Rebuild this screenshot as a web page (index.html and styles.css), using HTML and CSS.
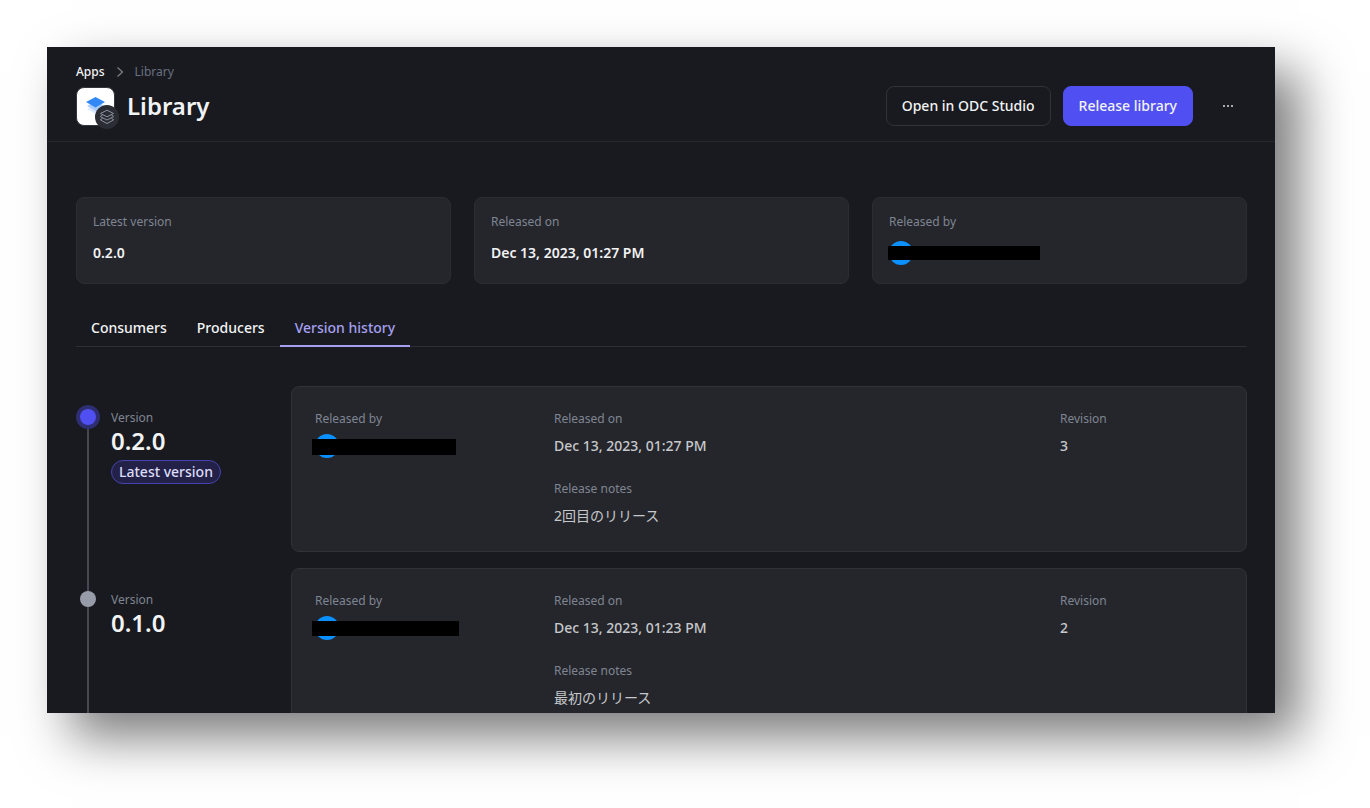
FILE: index.html
```
<!DOCTYPE html>
<html lang="en">
<head>
    <meta charset="UTF-8">
    <meta name="viewport" content="width=device-width, initial-scale=1.0">
    <title>Library - Version history</title>
    <link rel="stylesheet" href="styles.css">
</head>
<body>
    <div class="window">
        <header class="page-header">
            <div class="heading">
                <nav class="breadcrumb" aria-label="Breadcrumb">
                    <a href="#">Apps</a>
                    <svg width="8" height="12" viewBox="0 0 8 12"><path d="M1.500 1.500 6.500 6l-5 4.500" fill="none" stroke="#7d828c" stroke-width="1.200"/></svg>
                    <span>Library</span>
                </nav>
                <div class="title">
                    <div class="app-icon">
                        <svg width="38" height="38" viewBox="0 0 38 38">
                            <path d="M10 21 19 16.500 28 21l-9 5z" fill="#dbe9fd"/>
                            <path d="M10 18 19 13.500 28 18l-9 5z" fill="#a9ccfa"/>
                            <path d="M9 14 18.500 9 28 14l-9.500 5.500z" fill="#3289f5"/>
                        </svg>
                        <span class="app-type">
                            <svg width="16" height="16" viewBox="0 0 16 16" fill="none" stroke="#8b919c" stroke-linejoin="round">
                                <path d="M8 1.200 14.500 4.500 8 7.800 1.500 4.500z"/>
                                <path d="M1.500 7.200v.5L8 11l6.500-3.300v-.5L12.500 6.200M1.500 7.200l2-1M1.500 10.500v.5L8 14.500l6.500-3.500v-.5l-2-1M1.500 10.500l2-1"/>
                            </svg>
                        </span>
                    </div>
                    <h1>Library</h1>
                </div>
            </div>
            <div class="actions">
                <button type="button" class="btn">Open in ODC Studio</button>
                <button type="button" class="btn btn-primary">Release library</button>
                <button type="button" class="btn-more" aria-label="More">
                    <svg width="12" height="4" viewBox="0 0 12 4" fill="#d9dbdf"><circle cx="2" cy="2" r="1"/><circle cx="6" cy="2" r="1"/><circle cx="10" cy="2" r="1"/></svg>
                </button>
            </div>
        </header>

        <main>
            <section class="summary">
                <div class="card">
                    <p class="label">Latest version</p>
                    <p class="value">0.2.0</p>
                </div>
                <div class="card">
                    <p class="label">Released on</p>
                    <p class="value">Dec 13, 2023, 01:27 PM</p>
                </div>
                <div class="card">
                    <p class="label">Released by</p>
                    <div class="user"><span class="avatar"></span><span class="mask"></span></div>
                </div>
            </section>

            <nav class="tabs">
                <a href="#">Consumers</a>
                <a href="#">Producers</a>
                <a href="#" class="active" aria-current="page">Version history</a>
            </nav>

            <ol class="timeline">
                <li class="latest">
                    <span class="dot"></span>
                    <div class="version">
                        <p class="label">Version</p>
                        <h2>0.2.0</h2>
                        <span class="badge">Latest version</span>
                    </div>
                    <div class="release">
                        <div>
                            <p class="label">Released by</p>
                            <div class="user"><span class="avatar"></span><span class="mask"></span></div>
                        </div>
                        <div>
                            <p class="label">Released on</p>
                            <p class="detail">Dec 13, 2023, 01:27 PM</p>
                            <p class="label">Release notes</p>
                            <p class="detail" lang="ja">2回目のリリース</p>
                        </div>
                        <div>
                            <p class="label">Revision</p>
                            <p class="detail">3</p>
                        </div>
                    </div>
                </li>
                <li>
                    <span class="dot"></span>
                    <div class="version">
                        <p class="label">Version</p>
                        <h2>0.1.0</h2>
                    </div>
                    <div class="release">
                        <div>
                            <p class="label">Released by</p>
                            <div class="user"><span class="avatar"></span><span class="mask"></span></div>
                        </div>
                        <div>
                            <p class="label">Released on</p>
                            <p class="detail">Dec 13, 2023, 01:23 PM</p>
                            <p class="label">Release notes</p>
                            <p class="detail" lang="ja">最初のリリース</p>
                        </div>
                        <div>
                            <p class="label">Revision</p>
                            <p class="detail">2</p>
                        </div>
                    </div>
                </li>
            </ol>
        </main>
    </div>
</body>
</html>
```

FILE: styles.css
```
* { box-sizing: border-box; }
body {
    margin: 0;
    height: 100vh;
    padding: 47px 95px 95px 47px;
    background: #fff;
    color: #f2f3f5;
    font-family: "Noto Sans", "Noto Sans CJK JP", sans-serif;
    font-size: 14px;
    line-height: 20px;
}
h1, h2, p, ol { margin: 0; padding: 0; }
a { color: inherit; text-decoration: none; }
svg { display: block; }

.window {
    height: 100%;
    overflow: hidden;
    background: #191a1f;
    box-shadow: 24px 24px 48px rgba(0, 0, 0, 0.52);
}

/* header */
.page-header {
    display: flex;
    justify-content: space-between;
    align-items: flex-end;
    padding: 16px 24px 15px 29px;
    border-bottom: 1px solid #27282d;
}
.breadcrumb {
    display: flex;
    align-items: center;
    gap: 11px;
    margin-bottom: 5px;
    font-size: 12px;
    line-height: 18px;
    color: #6a7080;
}
.breadcrumb a { color: #f2f3f5; font-weight: 500; }
.title { display: flex; align-items: center; gap: 12px; height: 40px; }
.title h1 { font-size: 24px; line-height: 32px; font-weight: 600; }
.app-icon {
    position: relative;
    width: 39px;
    height: 39px;
    border: 1px solid #34363d;
    border-radius: 8px;
    background: #fff;
}
.app-type {
    position: absolute;
    right: -5px;
    bottom: -4px;
    display: grid;
    place-items: center;
    width: 24px;
    height: 24px;
    border-radius: 50%;
    background: #2b2d34;
}
.actions { display: flex; gap: 12px; }
.btn {
    height: 40px;
    padding: 0 15px;
    border: 1px solid #303238;
    border-radius: 8px;
    background: transparent;
    color: #f2f3f5;
    font: inherit;
    font-weight: 500;
    cursor: pointer;
}
.btn-primary { background: #5050f2; border-color: #5050f2; }
.btn-more {
    display: grid;
    place-items: center;
    width: 46px;
    height: 40px;
    padding: 0;
    border: none;
    background: transparent;
    cursor: pointer;
}

main { padding: 55px 28px 0 29px; }
.label { font-size: 12px; line-height: 18px; color: #7f8592; }

/* summary cards */
.summary { display: grid; grid-template-columns: repeat(3, 1fr); gap: 23px; }
.card {
    height: 87px;
    padding: 15px 16px;
    border: 1px solid #2b2d32;
    border-radius: 8px;
    background: #25262b;
}
.card .value { margin-top: 12px; font-weight: 600; }
.card .user { margin-top: 10px; }

/* user name is masked out */
.user { position: relative; height: 24px; }
.avatar { display: block; width: 24px; height: 24px; border-radius: 50%; background: #0a90ff; }
.mask { position: absolute; top: 5px; left: -1px; width: 152px; height: 14px; background: #000; }

/* tabs */
.tabs { display: flex; margin-top: 24px; border-bottom: 1px solid #2a3034; }
.tabs a { padding: 10px 15px 7px; margin-bottom: -1px; border-bottom: 2px solid transparent; font-weight: 500; }
.tabs .active { color: #a5a0f0; border-color: #a5a0f0; }

/* timeline */
.timeline { margin-top: 39px; list-style: none; }
.timeline li {
    position: relative;
    display: grid;
    grid-template-columns: 24px 169px 1fr;
    column-gap: 11px;
    padding-bottom: 16px;
}
.timeline li::before {
    content: "";
    position: absolute;
    top: 0;
    bottom: 0;
    left: 11px;
    width: 2px;
    background: #454750;
}
.timeline .latest::before { top: 31px; }
.dot {
    position: relative;
    width: 16px;
    height: 16px;
    margin: 23px 4px;
    border-radius: 50%;
    background: #989ca8;
}
.latest .dot { background: #5050f2; box-shadow: 0 0 0 4px #2f2e73; }
.version { padding-top: 23px; }
.version h2 { font-size: 24px; line-height: 28px; font-weight: 600; }
.badge {
    display: inline-block;
    margin-top: 5px;
    padding: 0 7px;
    border: 1px solid #4543ae;
    border-radius: 12px;
    background: #232147;
    color: #dddcf8;
    line-height: 22px;
    font-weight: 500;
}
.release {
    display: grid;
    grid-template-columns: 215fr 482fr 163fr;
    gap: 24px;
    height: 166px;
    padding: 23px;
    border: 1px solid #303238;
    border-radius: 8px;
    background: #25262b;
}
.detail { margin-top: 8px; font-weight: 500; color: #c6c8cc; }
.detail:lang(ja) { font-weight: 400; }
.detail + .label { margin-top: 24px; }
.release .user { margin-top: 6px; }
.release .mask { left: -3px; width: 147px; height: 15px; }
.latest .mask { width: 144px; height: 16px; }
```
